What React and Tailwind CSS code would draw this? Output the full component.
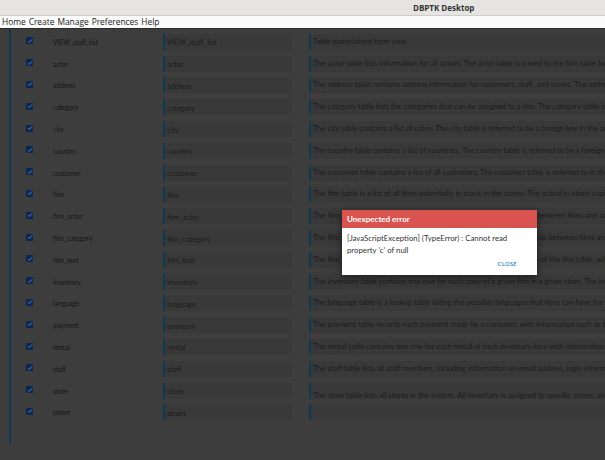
import React from "react";

const TABLES = [
  ["VIEW_staff_list", "Table materialized from view."],
  ["actor", "The actor table lists information for all actors. The actor table is joined to the film table by means of the film_actor table."],
  ["address", "The address table contains address information for customers, staff, and stores. The address table primary key appears as a foreign key in the customer, staff, and store tables."],
  ["category", "The category table lists the categories that can be assigned to a film. The category table is joined to the film table by means of the film_category table."],
  ["city", "The city table contains a list of cities. The city table is referred to by a foreign key in the address table and refers to the country table using a foreign key."],
  ["country", "The country table contains a list of countries. The country table is referred to by a foreign key in the city table."],
  ["customer", "The customer table contains a list of all customers. The customer table is referred to in the payment and rental tables and refers to the address and store tables using foreign keys."],
  ["film", "The film table is a list of all films potentially in stock in the stores. The actual in-stock copies of each film are represented in the inventory table."],
  ["film_actor", "The film_actor table is used to support a many-to-many relationship between films and actors."],
  ["film_category", "The film_category table is used to support a many-to-many relationship between films and categories."],
  ["film_text", "The film_text table contains the film_id, title and description columns of the film table, with the contents of the table kept in synchrony with the film table."],
  ["inventory", "The inventory table contains one row for each copy of a given film in a given store. The inventory table refers to the film and store tables."],
  ["language", "The language table is a lookup table listing the possible languages that films can have for their language and original language values."],
  ["payment", "The payment table records each payment made by a customer, with information such as the amount and the rental being paid for."],
  ["rental", "The rental table contains one row for each rental of each inventory item with information about who rented what item, when it was rented, and when it was returned."],
  ["staff", "The staff table lists all staff members, including information on email address, login information, and picture."],
  ["store", "The store table lists all stores in the system. All inventory is assigned to specific stores, and staff and customers are assigned a 'home store'."],
  ["street", ""],
];

const Check = () => (
  <div className="w-[7px] h-[7px] bg-[#0a2755] rounded-[1px] flex items-center justify-center">
    <svg width="6" height="6" viewBox="0 0 6 6">
      <path d="M1 3.2 L2.4 4.5 L5 1.4" fill="none" stroke="#6d7a93" strokeWidth="1" />
    </svg>
  </div>
);

export default function App() {
  return (
    <div className="w-[605px] h-[460px] overflow-hidden flex flex-col bg-[#3d3d3d] relative" style={{ fontFamily: "Lato, 'Open Sans', sans-serif" }}>
      {/* window title */}
      <div className="h-[16px] shrink-0 bg-[#e6e4e2] border-b border-[#cfcdca] flex items-center font-['Open_Sans',sans-serif]">
        <span className="ml-[413px] text-[8px] font-bold text-[#333]">DBPTK Desktop</span>
      </div>
      {/* menu */}
      <div className="h-[13px] shrink-0 bg-[#fafafa] border-b border-[#2a2a2a] flex items-center gap-[3px] pl-[2px] text-[8.4px] text-[#222] font-['Open_Sans',sans-serif]">
        <span>Home</span>
        <span>Create</span>
        <span>Manage</span>
        <span>Preferences</span>
        <span>Help</span>
      </div>

      {/* content under backdrop */}
      <div className="flex-1 flex pl-[9px]">
        <div className="w-[2px] h-[415px] bg-[#0c3a52] shrink-0" />
        <div className="flex-1 pt-[2px] min-w-0">
          {TABLES.map(([name, desc]) => (
            <div key={name} className="h-[21.8px] flex items-center">
              <div className="w-[42px] shrink-0 flex pl-[15px] pb-[2px]">
                <Check />
              </div>
              <div className="w-[110px] shrink-0 text-[6.7px] text-[#151515]">{name}</div>
              <div className="w-[129px] h-[16px] bg-[#393939] border-l-2 border-[#0c3a52] pl-[2px] pt-[2px] flex items-center text-[7.4px] text-[#1c1c1c] shrink-0">
                {name}
              </div>
              <div className="w-[17px] shrink-0" />
              <div className={"flex-1 h-[16px] bg-[#393939] border-l-2 border-[#0c3a52] pl-[2px] overflow-hidden text-[7.5px] leading-[11px] text-[#1c1c1c] " + (name === "store" ? "pt-[7px]" : "pt-[2px]")}>
                <div className="w-[500px]">{desc}</div>
              </div>
            </div>
          ))}
        </div>
      </div>

      {/* error dialog */}
      <div className="absolute left-[342px] top-[210px] w-[195px] bg-white shadow-[0_2px_8px_rgba(0,0,0,0.5)]">
        <div className="h-[18px] bg-[#d9534f] flex items-center pl-[5px] text-[8px] font-bold text-white">Unexpected error</div>
        <div className="px-[5px] pt-[4px] text-[7.8px] leading-[12px] text-[#333]">
          [JavaScriptException] (TypeError) : Cannot read property 'c' of null
        </div>
        <div className="flex justify-end pr-[20px] pt-[4px] pb-[6px]">
          <span className="text-[5.8px] font-bold tracking-[0.3px] text-[#4a8fd0]">CLOSE</span>
        </div>
      </div>
    </div>
  );
}
